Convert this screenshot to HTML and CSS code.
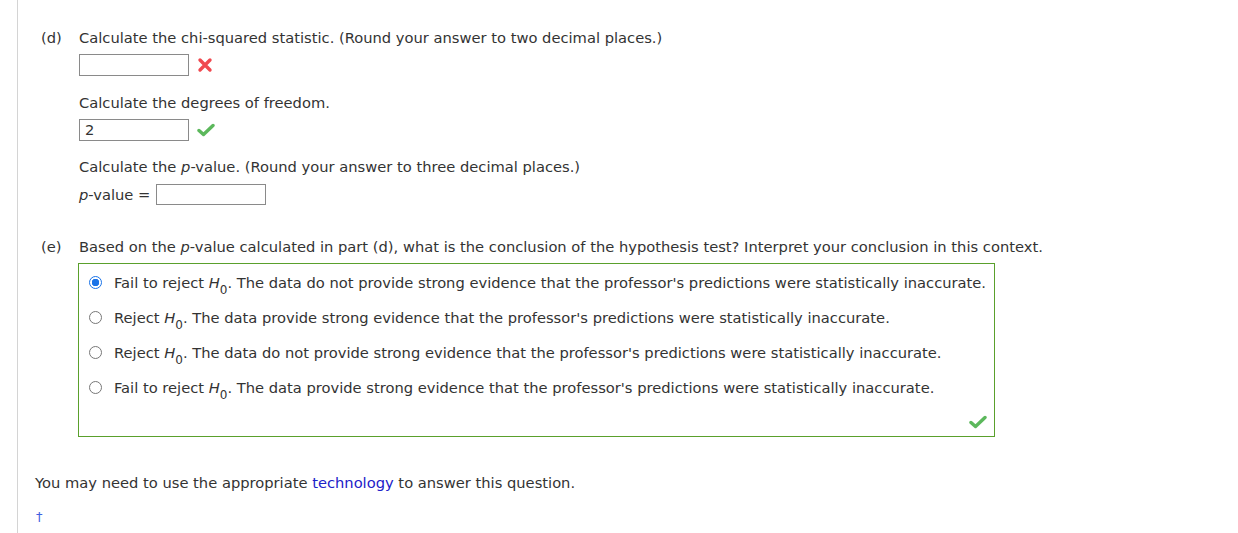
FILE: index.html
```html
<!DOCTYPE html>
<html>
<head>
<meta charset="utf-8">
<link rel="stylesheet" href="styles.css">
</head>
<body>
<div class="page">
  <div class="part part-d">
    <div class="label">(d)</div>
    <div class="body">
      <div class="line first">Calculate the chi-squared statistic. (Round your answer to two decimal places.)</div>
      <div class="answer">
        <span class="box"></span>
        <svg class="mark" width="16" height="16" viewBox="0 0 16 16"><path d="M3 3 L13 13 M13 3 L3 13" stroke="#f0494f" stroke-width="3.4" stroke-linecap="round"/></svg>
      </div>
      <div class="line">Calculate the degrees of freedom.</div>
      <div class="answer">
        <span class="box filled">2</span>
        <svg class="mark check" width="18" height="14" viewBox="0 0 18 14"><path d="M2 7.5 L6.5 11.5 L16 2.5" fill="none" stroke="#5cb85c" stroke-width="3.4" stroke-linecap="round" stroke-linejoin="round"/></svg>
      </div>
      <div class="line l3">Calculate the <i class="pv">p</i>-value. (Round your answer to three decimal places.)</div>
      <div class="pval"><i class="pv">p</i>-value = <span class="box"></span></div>
    </div>
  </div>

  <div class="part part-e">
    <div class="label">(e)</div>
    <div class="body">
      <div class="line first">Based on the <i class="pv">p</i>-value calculated in part (d), what is the conclusion of the hypothesis test? Interpret your conclusion in this context.</div>
      <div class="choices">
        <div class="opt"><span class="radio on"></span><span>Fail to reject <i>H</i><sub>0</sub>. The data do not provide strong evidence that the professor's predictions were statistically inaccurate.</span></div>
        <div class="opt"><span class="radio"></span><span>Reject <i>H</i><sub>0</sub>. The data provide strong evidence that the professor's predictions were statistically inaccurate.</span></div>
        <div class="opt"><span class="radio"></span><span>Reject <i>H</i><sub>0</sub>. The data do not provide strong evidence that the professor's predictions were statistically inaccurate.</span></div>
        <div class="opt"><span class="radio"></span><span>Fail to reject <i>H</i><sub>0</sub>. The data provide strong evidence that the professor's predictions were statistically inaccurate.</span></div>
        <div class="foot">
          <svg class="check" width="18" height="14" viewBox="0 0 18 14"><path d="M2 7.5 L6.5 11.5 L16 2.5" fill="none" stroke="#5cb85c" stroke-width="3.4" stroke-linecap="round" stroke-linejoin="round"/></svg>
        </div>
      </div>
    </div>
  </div>

  <p class="note">You may need to use the appropriate <a href="#">technology</a> to answer this question.</p>
  <div class="dagger">†</div>
</div>
</body>
</html>
```
FILE: styles.css
```css
html, body { margin: 0; padding: 0; background: #fff; }
body { font-family: "DejaVu Sans", Verdana, sans-serif; font-size: 14.7px; color: #333; }
.page {
  margin-left: 17px;
  border-left: 1px solid #d4d4d4;
  height: 533px;
  overflow: hidden;
  padding-left: 17px;
  padding-top: 28px;
  box-sizing: border-box;
}
.part { display: flex; }
.label { width: 44px; padding-left: 6px; box-sizing: border-box; line-height: 20px; flex: none; }
.body { flex: 1; }
.line { line-height: 20px; margin-top: 17px; }
.line.first { margin-top: 0; }
.line.l3 { margin-top: 16px; }
.answer { display: flex; align-items: center; margin-top: 6px; height: 22px; }
.box {
  display: inline-block;
  width: 110px; height: 22px;
  border: 1px solid #8a8a8a;
  box-sizing: border-box;
  vertical-align: middle;
  font-size: 14.7px; line-height: 20px;
  padding-left: 5px;
  color: #333;
}
.mark { margin-left: 8px; }
.pv { font-style: italic; }
.pval { margin-top: 7px; display: flex; align-items: center; }
.pval .box { margin-left: 6px; height: 21px; }
.part-e { margin-top: 32px; }
.choices {
  margin-top: 6px;
  margin-left: -1px;
  width: 917px;
  border: 1px solid #5aa02c;
  box-sizing: border-box;
  padding-top: 1px;
}
.opt { display: flex; align-items: center; height: 35px; }
.radio {
  width: 13px; height: 13px;
  border: 1px solid #777;
  border-radius: 50%;
  margin-left: 10px; margin-right: 12px;
  flex: none;
  box-sizing: border-box;
}
.radio.on { border: 1px solid #1a73e8; background: radial-gradient(circle, #1a73e8 0 3.5px, #fff 4px); }
sub { font-size: 12px; vertical-align: -6px; line-height: 0; }
.foot { display: flex; justify-content: flex-end; padding: 10px 7px 7px 0; }
.note { margin: 36px 0 0 0; font-family: "DejaVu Sans", Verdana, sans-serif; font-size: 14.7px; line-height: 20px; }
.note a { color: #2020c8; text-decoration: none; }
.dagger { color: #4060e0; margin-top: 16px; font-size: 13px; line-height: 16px; padding-left: 1px; }
```
